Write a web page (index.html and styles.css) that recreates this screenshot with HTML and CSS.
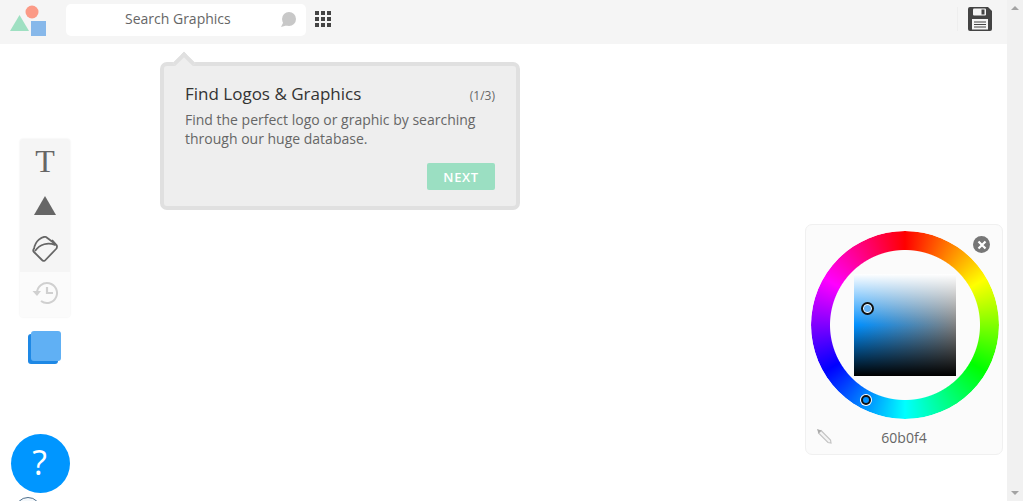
FILE: index.html
```html
<!DOCTYPE html>
<html lang="en">
<head>
    <meta charset="UTF-8">
    <meta name="viewport" content="width=device-width, initial-scale=1.0">
    <title>Graphics Editor</title>
    <link rel="stylesheet" href="styles.css">
</head>
<body>
    <div class="page">
        <div class="editor">
            <header class="topbar">
                <svg class="logo" width="48" height="38" viewBox="0 0 48 38">
                    <circle cx="32" cy="12" r="6.5" fill="#fb9a86"/>
                    <path d="M10 31 L19.5 15 L29 31 Z" fill="#9fe0c2"/>
                    <rect x="31" y="21" width="15" height="15" fill="#87b8ea"/>
                </svg>
                <div class="search">
                    <span class="search-text">Search Graphics</span>
                    <svg class="search-icon" width="18" height="18" viewBox="0 0 18 18">
                        <circle cx="10" cy="8" r="7" fill="#c8c8c8"/>
                        <path d="M5 10 L2 16 L9 14 Z" fill="#c8c8c8"/>
                    </svg>
                </div>
                <div class="apps">
                    <span></span><span></span><span></span>
                    <span></span><span></span><span></span>
                    <span></span><span></span><span></span>
                </div>
                <div class="topbar-right">
                    <div class="divider"></div>
                    <svg width="24" height="24" viewBox="0 0 24 24">
                        <path d="M2 0 H20 L24 4 V22 a2 2 0 0 1 -2 2 H2 a2 2 0 0 1 -2 -2 V2 a2 2 0 0 1 2 -2 Z" fill="#444"/>
                        <rect x="5" y="1.5" width="13" height="7" rx="1" fill="#f5f5f5"/>
                        <rect x="13.5" y="2.5" width="3" height="5" fill="#444"/>
                        <rect x="4" y="12" width="16" height="10.5" fill="#f5f5f5"/>
                        <path d="M6 15 H18 M6 17.5 H18 M6 20 H18" stroke="#444" stroke-width="1.2"/>
                    </svg>
                </div>
            </header>

            <div class="tour">
                <div class="tour-arrow"></div>
                <div class="tour-head">
                    <h2>Find Logos &amp; Graphics</h2>
                    <span class="tour-count">(1/3)</span>
                </div>
                <p>Find the perfect logo or graphic by searching through our huge database.</p>
                <div class="tour-foot">
                    <button class="next-button">NEXT</button>
                </div>
            </div>

            <div class="tools">
                <div class="tools-main">
                    <span class="tool-text">T</span>
                    <svg width="22" height="19" viewBox="0 0 22 19"><path d="M11 0 L22 19 H0 Z" fill="#666"/></svg>
                    <svg width="26" height="26" viewBox="0 0 26 26" fill="none" stroke="#666" stroke-width="1.8" stroke-linejoin="round">
                        <path d="M20 4 L24.5 9 Q25.5 10.5 24.5 12.5 L13 24.5 Q11 25.5 10 24 L2 16 Q0.5 14.5 2 12.5"/>
                        <path d="M2 13 C3 5 10 0 14 1 L22 7 L23 9 C16 6 8 8 3 15"/>
                    </svg>
                </div>
                <div class="tools-history">
                    <svg width="26" height="24" viewBox="0 0 26 24" fill="none" stroke="#d0d0d0" stroke-width="2">
                        <path d="M5 12 A10 10 0 1 1 9 20"/>
                        <path d="M0.5 10 H9 L5 15 Z" fill="#d0d0d0" stroke="none"/>
                        <path d="M15 6 V12 H21" stroke-width="2.2"/>
                    </svg>
                </div>
            </div>

            <div class="swatch"></div>

            <div class="help">?</div>
            <div class="avatar"></div>

            <div class="picker">
                <div class="wheel"></div>
                <div class="shade"></div>
                <span class="marker shade-marker"></span>
                <span class="marker hue-marker"></span>
                <div class="close">
                    <svg width="10" height="10" viewBox="0 0 10 10"><path d="M1.5 1.5 L8.5 8.5 M8.5 1.5 L1.5 8.5" stroke="#fff" stroke-width="2.2"/></svg>
                </div>
                <svg class="dropper" width="16" height="16" viewBox="0 0 16 16">
                    <path d="M5 2.5 L14.5 12 L15 15 L12 14.5 L2.5 5 Z" fill="#f4f4f4" stroke="#c4c4c4" stroke-width="1.2"/>
                    <path d="M1 1 L5.5 2.5 L2.5 5.5 Z" fill="#aaa"/>
                </svg>
                <span class="hex">60b0f4</span>
            </div>
        </div>

        <div class="scrollbar">
            <span class="arrow-up"></span>
            <span class="arrow-down"></span>
        </div>
    </div>
</body>
</html>
```

FILE: styles.css
```css
html, body {
    margin: 0;
    height: 100%;
    overflow: hidden;
}
body {
    font-family: "Open Sans", Arial, sans-serif;
    background-color: #fff;
}
.page {
    display: flex;
    height: 501px;
}
.editor {
    flex: 1;
    position: relative;
    overflow: hidden;
}

/* top bar */
.topbar {
    display: flex;
    align-items: flex-start;
    height: 44px;
    background-color: #f5f5f5;
}
.logo {
    flex: none;
    margin-right: 18px;
}
.search {
    display: flex;
    align-items: center;
    justify-content: space-between;
    width: 240px;
    height: 32px;
    margin-top: 4px;
    padding: 0 9px 0 59px;
    box-sizing: border-box;
    background-color: #fff;
    border-radius: 5px;
}
.search-text {
    font-size: 14px;
    color: #666;
    margin-bottom: 4px;
}
.apps {
    display: grid;
    grid-template-columns: repeat(3, 4px);
    grid-auto-rows: 4px;
    gap: 2px;
    margin-left: 9px;
    margin-top: 11px;
}
.apps span {
    background-color: #444;
}
.topbar-right {
    display: flex;
    align-items: center;
    gap: 10px;
    margin-left: auto;
    margin-right: 15px;
    margin-top: 7px;
}
.divider {
    width: 1px;
    height: 24px;
    background-color: #eee;
}

/* tour popup */
.tour {
    position: absolute;
    left: 160px;
    top: 62px;
    width: 360px;
    height: 148px;
    box-sizing: border-box;
    padding: 16px 21px 16px;
    background-color: #eee;
    border: 4px solid #e0e0e0;
    border-radius: 7px;
}
.tour-arrow {
    position: absolute;
    left: 12px;
    top: -11px;
    width: 16px;
    height: 16px;
    background-color: #eee;
    border-top: 4px solid #e0e0e0;
    border-left: 4px solid #e0e0e0;
    box-sizing: border-box;
    transform: rotate(45deg);
}
.tour-head {
    display: flex;
    align-items: baseline;
    justify-content: space-between;
    position: relative;
}
.tour h2 {
    margin: 0;
    font-size: 17px;
    font-weight: 400;
    line-height: 24px;
    color: #333;
}
.tour-count {
    font-size: 12px;
    color: #666;
}
.tour p {
    margin: 4px 0 0;
    font-size: 14px;
    line-height: 19px;
    color: #666;
}
.tour-foot {
    display: flex;
    justify-content: flex-end;
    margin-top: 15px;
}
.next-button {
    width: 68px;
    height: 27px;
    padding: 0;
    border: none;
    border-radius: 2px;
    background-color: #9bdfc2;
    color: #fff;
    font-family: inherit;
    font-size: 13px;
    font-weight: 600;
    letter-spacing: 0.6px;
}

/* left tools */
.tools {
    position: absolute;
    left: 20px;
    top: 139px;
    width: 50px;
    border-radius: 3px;
    overflow: hidden;
    box-shadow: 0 0 2px #e8e8e8;
}
.tools-main {
    display: flex;
    flex-direction: column;
    align-items: center;
    gap: 21px;
    height: 133px;
    box-sizing: border-box;
    padding-top: 4px;
    background-color: #f5f5f5;
}
.tool-text {
    height: 32px;
    font-family: "Liberation Serif", serif;
    font-size: 32px;
    line-height: 36px;
    color: #666;
}
.tools-history {
    display: flex;
    align-items: center;
    justify-content: center;
    height: 45px;
    box-sizing: border-box;
    padding-bottom: 3px;
    background-color: #fbfbfb;
}
.swatch {
    position: absolute;
    left: 31px;
    top: 331px;
    width: 30px;
    height: 30px;
    background-color: #60b0f4;
    border-radius: 3px;
    box-shadow: -3px 3px 0 #1e88e5;
}
.help {
    position: absolute;
    left: 11px;
    top: 434px;
    width: 59px;
    height: 59px;
    box-sizing: border-box;
    padding-right: 2px;
    border-radius: 50%;
    background-color: #0096ff;
    color: #fff;
    font-size: 34px;
    font-weight: 500;
    line-height: 57px;
    text-align: center;
}
.avatar {
    position: absolute;
    left: 15px;
    top: 497px;
    width: 24px;
    height: 24px;
    border-radius: 50%;
    border: 1px solid #4f6f8c;
    background-color: #f4f8fb;
}

/* color picker */
.picker {
    position: absolute;
    left: 805px;
    top: 224px;
    width: 198px;
    height: 231px;
    box-sizing: border-box;
    background-color: #fbfbfb;
    border: 1px solid #f0f0f0;
    border-radius: 7px;
}
.wheel {
    position: absolute;
    left: 5px;
    top: 6px;
    width: 188px;
    height: 188px;
    border-radius: 50%;
    background: conic-gradient(#f00, #ff0 60deg, #0f0 120deg, #0ff 180deg, #00f 240deg, #f0f 300deg, #f00);
    -webkit-mask: radial-gradient(circle, transparent 74.5px, #000 75.5px);
    mask: radial-gradient(circle, transparent 74.5px, #000 75.5px);
}
.shade {
    position: absolute;
    left: 48px;
    top: 49px;
    width: 102px;
    height: 102px;
    background:
        linear-gradient(to bottom, #fff, rgba(255, 255, 255, 0) 50%, rgba(0, 0, 0, 0) 50%, #000),
        linear-gradient(to right, #0090ff, #808080);
}
.marker {
    position: absolute;
    box-sizing: border-box;
    border-radius: 50%;
    border: 2px solid #111;
}
.shade-marker {
    left: 55px;
    top: 77px;
    width: 13px;
    height: 13px;
    background-color: #60b0f4;
    box-shadow: inset 0 0 0 1px #fff;
}
.hue-marker {
    left: 55px;
    top: 170px;
    width: 10px;
    height: 10px;
    background-color: #0090ff;
    box-shadow: 0 0 0 1px #fff;
}
.close {
    position: absolute;
    left: 167px;
    top: 11px;
    display: flex;
    align-items: center;
    justify-content: center;
    width: 17px;
    height: 17px;
    border-radius: 50%;
    background-color: #777;
}
.dropper {
    position: absolute;
    left: 10px;
    top: 203px;
}
.hex {
    position: absolute;
    left: 0;
    right: 0;
    top: 203px;
    text-align: center;
    font-size: 14px;
    line-height: 19px;
    color: #666;
}

/* fake scrollbar */
.scrollbar {
    display: flex;
    flex-direction: column;
    align-items: center;
    justify-content: space-between;
    flex: none;
    width: 16px;
    box-sizing: border-box;
    padding: 6px 0;
    background-color: #f1f1f1;
}
.arrow-up {
    border-left: 4px solid transparent;
    border-right: 4px solid transparent;
    border-bottom: 4px solid #a3a3a3;
}
.arrow-down {
    border-left: 4px solid transparent;
    border-right: 4px solid transparent;
    border-top: 4px solid #a3a3a3;
}
```
